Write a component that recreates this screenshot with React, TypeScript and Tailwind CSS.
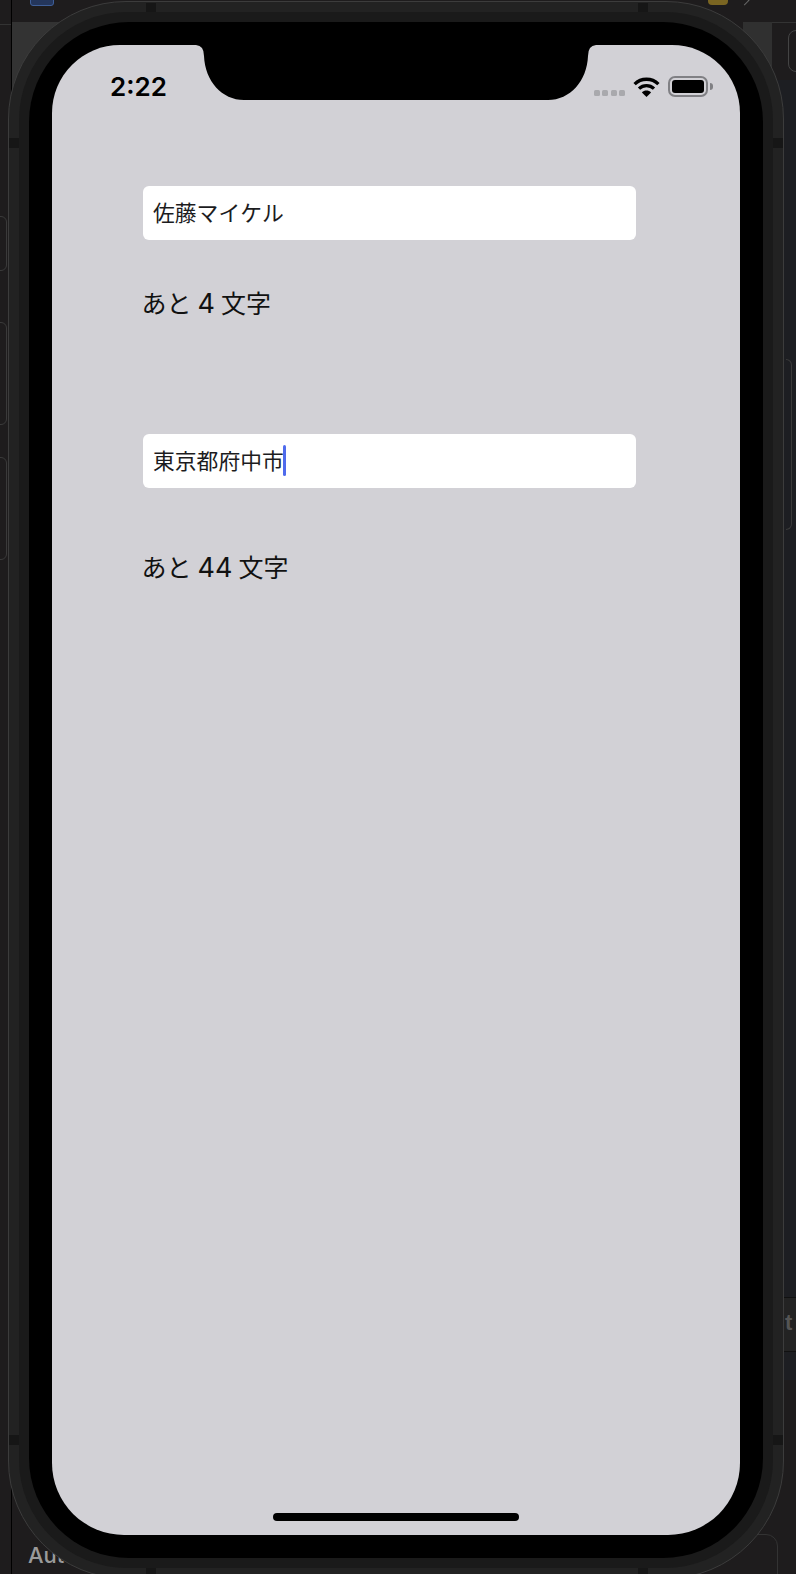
const TEXT_FONT = "font-['Inter','Noto_Sans_CJK_JP',sans-serif]"

const FRAME_TICKS = [
  'left-[137px] top-[1px] h-[11px] w-[10px]',
  'left-[629px] top-[1px] h-[11px] w-[10px]',
  'left-[137px] bottom-0 h-[11px] w-[10px]',
  'left-[629px] bottom-0 h-[11px] w-[10px]',
  'left-0 top-[136px] h-[10px] w-[11px]',
  'right-0 top-[136px] h-[10px] w-[11px]',
  'left-0 top-[1433px] h-[10px] w-[11px]',
  'right-0 top-[1433px] h-[10px] w-[11px]',
]

const SIDE_BUTTONS = [
  'left-[-6px] top-[216px] h-[55px] w-[13px] rounded-md border-[#3a3a3a]',
  'left-[-6px] top-[322px] h-[103px] w-[13px] rounded-md border-[#3a3a3a]',
  'left-[-6px] top-[457px] h-[103px] w-[13px] rounded-md border-[#3a3a3a]',
  'left-[786px] top-[359px] h-[171px] w-[6px] rounded-r-md border-l-0 border-[#3a3a3a]',
]

function Backdrop() {
  return (
    <>
      <div className="absolute left-[11px] top-0 h-full w-px bg-black" />
      <div className="absolute left-0 top-[24px] h-px w-[11px] bg-[#333]" />
      <div className="absolute left-[12px] top-[22px] h-[70px] w-[50px] bg-[#333]" />
      <div className="absolute left-[30px] top-[-8px] h-[14px] w-[24px] rounded-[3px] border border-[#3f5f99] bg-[#24365c]" />
      <div className="absolute left-[708px] top-0 h-[5px] w-[20px] rounded-b-sm bg-[#7a6522]" />
      <div className="absolute left-[741px] top-[-3px] h-[7px] w-[7px] rotate-45 border-r border-t border-[#666]" />
      <div className="absolute left-[743px] top-[22px] h-[60px] w-[29px] bg-[#303030]" />
      <div className="absolute left-[772px] top-[22px] h-px w-[24px] bg-[#333]" />
      <div className="absolute left-[788px] top-[30px] h-[42px] w-[20px] rounded-lg border border-[#444]" />
      <div className="absolute left-[770px] top-[80px] h-[1300px] w-[26px] bg-[#1d1e22]" />
      <div className="absolute left-[770px] top-[1297px] h-[55px] w-[26px] border-y border-[#111] bg-[#232323] pl-[15px] font-['Liberation_Sans',sans-serif] text-[22px] font-bold leading-[50px] text-[#555]">
        t
      </div>
      <div className="absolute left-[28px] top-[1541px] text-[22px] font-medium leading-7 text-[#9a9a9a]">
        Auto
      </div>
      <div className="absolute left-[700px] top-[1534px] h-[60px] w-[78px] rounded-xl border border-[#333]" />
      {SIDE_BUTTONS.map((cls) => (
        <div key={cls} className={`absolute border ${cls}`} />
      ))}
    </>
  )
}

function SignalDots() {
  return (
    <div className="flex gap-[2.5px]">
      {[0, 1, 2, 3].map((i) => (
        <div key={i} className="size-[6px] rounded-[1.5px] bg-[#a9a9ad]" />
      ))}
    </div>
  )
}

function WifiIcon() {
  return (
    <svg width="27" height="20" viewBox="0 0 27 20" fill="none" stroke="black" strokeWidth="3.3">
      <path d="M1.6 7.2C8.2 .6 18.8 .6 25.4 7.2" />
      <path d="M6 11.6C10.2 7.6 16.8 7.6 21 11.6" />
      <path d="M13.5 20L8.9 15.4C11.4 13 15.6 13 18.1 15.4Z" fill="black" stroke="none" />
    </svg>
  )
}

function BatteryIcon() {
  return (
    <div className="flex items-center gap-[2px]">
      <div className="h-[21px] w-[40px] rounded-[7px] border-2 border-[#808084] p-[2px]">
        <div className="h-full w-full rounded-[3px] bg-black" />
      </div>
      <div className="h-[7px] w-[3px] rounded-r-full bg-[#808084]" />
    </div>
  )
}

function StatusBar() {
  return (
    <div className="flex h-[58px] items-end justify-between pb-[1px] pl-[58px] pr-[27px]">
      <span className="text-[26px] font-semibold leading-[30px] text-black">2:22</span>
      <div className="mb-[5px] flex items-center gap-[8px]">
        <div className="mt-[13px]">
          <SignalDots />
        </div>
        <WifiIcon />
        <BatteryIcon />
      </div>
    </div>
  )
}

function Notch() {
  return (
    <svg className="absolute left-[138px] top-0" width="412" height="56" viewBox="0 0 412 56" fill="black">
      <path d="M4 0H6Q14 .5 14 11C15 36 32 55 54 55H358C380 55 397 36 398 11Q398 .5 406 0H408V-1H4Z" />
    </svg>
  )
}

function TextField({ value, focused }: { value: string; focused?: boolean }) {
  return (
    <div className="flex h-[54px] w-[493px] items-center rounded-md bg-white pl-[10px] text-[21.8px] text-[#1c1c1e]">
      <span>{value}</span>
      {focused && <span className="-ml-[1px] mb-[1px] h-[31px] w-[3px] rounded-full bg-[#4f6bed]" />}
    </div>
  )
}

function Remaining({ count, className }: { count: string; className: string }) {
  return (
    <p className={`-ml-[1.5px] text-[25px] leading-[36px] text-[#111] [word-spacing:-1px] ${className}`}>
      あと <span className="text-[27px]">{count}</span> 文字
    </p>
  )
}

export default function App() {
  return (
    <div className={`relative h-[1574px] w-[796px] overflow-hidden bg-[#1e1c1d] ${TEXT_FONT}`}>
      <Backdrop />
      <div className="relative ml-[8px] mt-[1px] h-[1578px] w-[776px] rounded-[118px] border border-[#3c3c3c] bg-[#222222] p-[10px]">
        {FRAME_TICKS.map((cls) => (
          <div key={cls} className={`absolute bg-[#161616] ${cls}`} />
        ))}
        <div className="relative h-full rounded-[108px] bg-[#1a1a1a] p-[10px]">
          <div className="h-full rounded-[100px] bg-black p-[23px]">
            <div className="relative flex h-full flex-col rounded-b-[72px] rounded-t-[68px] bg-[#d2d1d6]">
              <Notch />
              <StatusBar />
              <main className="flex flex-col pl-[91px] pt-[83px]">
                <TextField value="佐藤マイケル" />
                <Remaining count="4" className="mt-[46px]" />
                <div className="mt-[112px]">
                  <TextField value="東京都府中市" focused />
                </div>
                <Remaining count="44" className="mt-[62px]" />
              </main>
              <div className="mb-[14px] mt-auto h-[8px] w-[246px] self-center rounded-full bg-black" />
            </div>
          </div>
        </div>
      </div>
    </div>
  )
}
